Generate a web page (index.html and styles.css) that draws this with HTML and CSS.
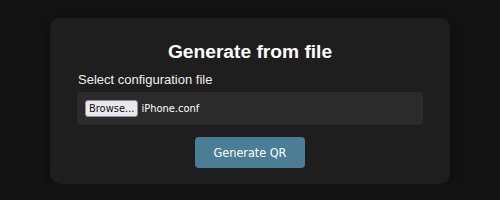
FILE: index.html
```html
<!DOCTYPE html>
<html lang="en">
<head>
  <meta charset="UTF-8">
  <meta name="viewport" content="width=device-width, initial-scale=1.0">
  <title>Generate from file</title>
  <link rel="stylesheet" href="styles.css">
</head>
<body>
  <div class="card">
    <h2>Generate from file</h2>
    <label class="field-label" for="config-file">Select configuration file</label>
    <div class="file-box" id="config-file">
      <span class="browse">Browse...</span>
      <span class="file-name">iPhone.conf</span>
    </div>
    <div class="actions">
      <button class="primary">Generate QR</button>
    </div>
  </div>
</body>
</html>
```

FILE: styles.css
```css
body {
  margin: 0;
  background-color: #131313;
  color: #ffffff;
  font-family: "Liberation Sans", Arial, sans-serif;
}
.card {
  box-sizing: border-box;
  width: 400px;
  margin: 18px auto 0;
  padding: 23px 27px 16px;
  background-color: #1e1e1e;
  border-radius: 10px;
  box-shadow: 0 4px 12px rgba(0, 0, 0, 0.45);
}
h2 {
  margin: 0;
  font-size: 19.2px;
  line-height: 22px;
  text-align: center;
}
.field-label {
  display: block;
  margin: 9px 0 4px 1px;
  font-size: 13px;
  line-height: 16px;
  color: #eeeeee;
}
.file-box {
  display: flex;
  align-items: center;
  gap: 3px;
  height: 33px;
  padding: 0 8px;
  background-color: #2b2b2b;
  border-radius: 4px;
  font-family: "DejaVu Sans Condensed", "DejaVu Sans", sans-serif;
  font-size: 11px;
}
.browse {
  box-sizing: border-box;
  height: 17px;
  padding: 1px 3px 0;
  line-height: 14px;
  color: #111111;
  background-color: #e9e9ed;
  border: 1px solid #8f8f9d;
  border-radius: 3px;
}
.file-name {
  color: #ffffff;
}
.actions {
  display: flex;
  justify-content: center;
  margin-top: 12px;
}
.primary {
  width: 110px;
  height: 31px;
  font-family: "DejaVu Sans Condensed", "DejaVu Sans", sans-serif;
  font-size: 12.5px;
  color: #ffffff;
  background-color: #4a7d96;
  border: none;
  border-radius: 4px;
  cursor: pointer;
}
```
